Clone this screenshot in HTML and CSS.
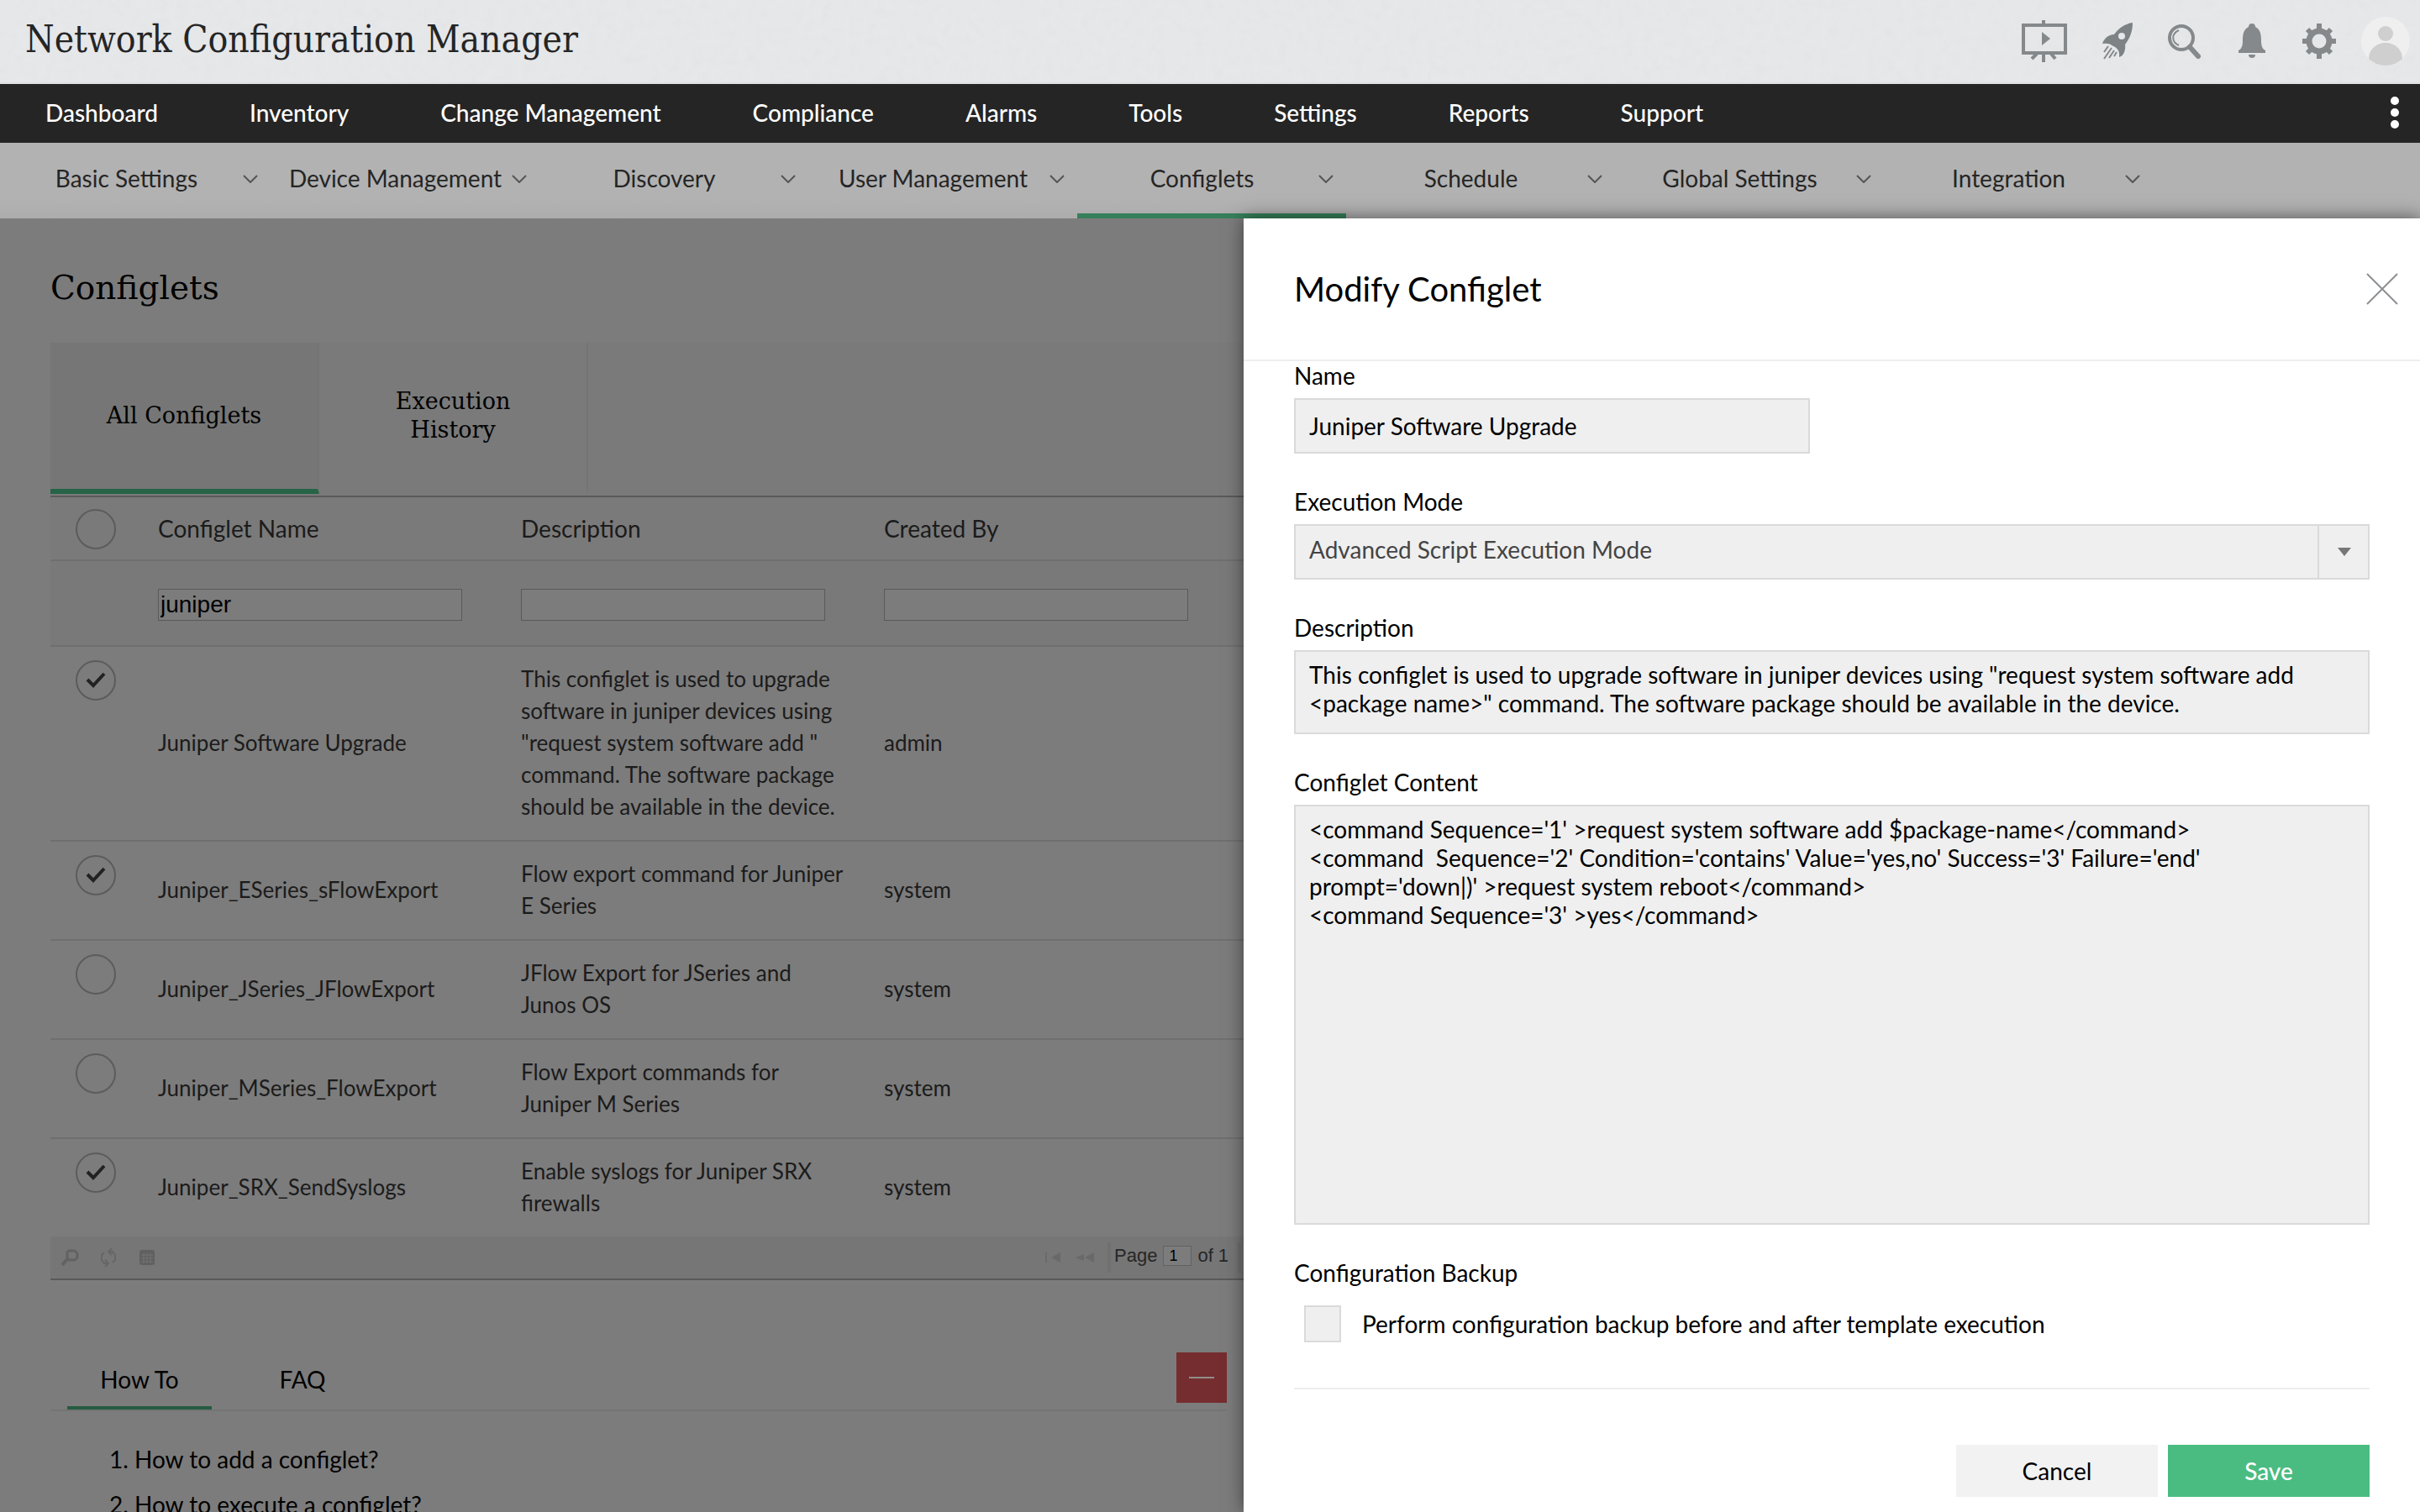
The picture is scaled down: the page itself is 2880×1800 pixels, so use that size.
FILE: index.html
```html
<!DOCTYPE html>
<html lang="en">
<head>
<meta charset="utf-8">
<title>Network Configuration Manager</title>
<link rel="stylesheet" href="styles.css">
</head>
<body>
<header class="topbar">
  <svg class="topbar-texture" aria-hidden="true">
    <filter id="paper"><feTurbulence type="fractalNoise" baseFrequency="0.09" numOctaves="3" seed="4"/><feColorMatrix type="saturate" values="0"/></filter>
    <rect width="100%" height="100%" filter="url(#paper)"/>
  </svg>
  <div class="brand">Network Configuration Manager</div>
  <div class="tools">
    <button class="tool" aria-label="Presentation">
      <svg width="54" height="50" viewBox="0 0 54 50" fill="none" stroke="#85898b">
        <path d="M26 0v6M26 39v11" stroke-width="4"/>
        <rect x="2" y="6" width="50" height="33" stroke-width="4"/>
        <path d="M18 40l-6 6M35 40l5 6" stroke-width="4"/>
        <path d="M24 14l10 8-10 8z" fill="#85898b" stroke="none"/>
      </svg>
    </button>
    <button class="tool" aria-label="Quick start">
      <svg width="40" height="44" viewBox="0 0 40 44">
        <path fill="#7d8284" fill-rule="evenodd" d="M38 0C29 1 21 7 16 14 9 14 4 19 2 25 7 24 12 25 15 28c5 2 8 6 7 13 5-1 8-8 7-15 6-8 9-16 9-26zM25 12a4 4 0 1 1 0 8 4 4 0 0 1 0-8z"/>
        <path d="M9 28l-5 7M13 30L4 43M16 33l-6 9M19 35l-3 5" stroke="#85898b" stroke-width="2" fill="none"/>
      </svg>
    </button>
    <button class="tool" aria-label="Search">
      <svg width="40" height="42" viewBox="0 0 40 42" fill="none" stroke="#85898b">
        <circle cx="16" cy="17" r="14" stroke-width="4"/>
        <path d="M13 8c-9 4-9 14 0 18" stroke-width="2"/>
        <path d="M26 28l10 11" stroke-width="6" stroke-linecap="round"/>
      </svg>
    </button>
    <button class="tool" aria-label="Notifications">
      <svg width="40" height="42" viewBox="0 0 40 42" fill="#85898b">
        <path d="M20 0c3 0 4 2 4 4 6 3 7 9 7 16 0 6 1 10 5 12v3H4v-3c4-2 5-6 5-12 0-7 1-13 7-16 0-2 1-4 4-4z"/>
        <path d="M16 37h8c0 3-2 4-4 4s-4-1-4-4z"/>
      </svg>
    </button>
    <button class="tool" aria-label="Settings">
      <svg width="40" height="42" viewBox="0 0 40 42" fill="none" stroke="#85898b">
        <circle cx="20" cy="21" r="12" stroke-width="7"/>
        <path d="M20 0v8M20 34v8M0 21h8M32 21h8M6 7l6 6M28 29l6 6M34 7l-6 6M12 29l-6 6" stroke-width="6"/>
      </svg>
    </button>
    <button class="tool tool-user" aria-label="Account">
      <svg width="58" height="58" viewBox="0 0 58 58">
        <circle cx="29" cy="29" r="29" fill="#efefef"/>
        <circle cx="29" cy="20" r="9" fill="#cfcfcf"/>
        <path d="M9 50c0-11 9-19 20-19s20 8 20 19a29 29 0 0 1-40 0z" fill="#cfcfcf"/>
      </svg>
    </button>
  </div>
</header>

<nav class="mainnav">
  <a href="#">Dashboard</a>
  <a href="#">Inventory</a>
  <a href="#">Change Management</a>
  <a href="#">Compliance</a>
  <a href="#">Alarms</a>
  <a href="#">Tools</a>
  <a href="#">Settings</a>
  <a href="#">Reports</a>
  <a href="#">Support</a>
  <button class="more" aria-label="More"><svg width="10" height="38" viewBox="0 0 10 38" fill="#fff"><circle cx="5" cy="5" r="5"/><circle cx="5" cy="19" r="5"/><circle cx="5" cy="33" r="5"/></svg></button>
</nav>

<nav class="subnav">
  <a href="#"><span>Basic Settings</span><svg class="chev" viewBox="0 0 18 10"><path d="M1 1l8 8 8-8"/></svg></a>
  <a href="#"><span>Device Management</span><svg class="chev" viewBox="0 0 18 10"><path d="M1 1l8 8 8-8"/></svg></a>
  <a href="#"><span>Discovery</span><svg class="chev" viewBox="0 0 18 10"><path d="M1 1l8 8 8-8"/></svg></a>
  <a href="#"><span>User Management</span><svg class="chev" viewBox="0 0 18 10"><path d="M1 1l8 8 8-8"/></svg></a>
  <a href="#" class="active"><span>Configlets</span><svg class="chev" viewBox="0 0 18 10"><path d="M1 1l8 8 8-8"/></svg></a>
  <a href="#"><span>Schedule</span><svg class="chev" viewBox="0 0 18 10"><path d="M1 1l8 8 8-8"/></svg></a>
  <a href="#"><span>Global Settings</span><svg class="chev" viewBox="0 0 18 10"><path d="M1 1l8 8 8-8"/></svg></a>
  <a href="#"><span>Integration</span><svg class="chev" viewBox="0 0 18 10"><path d="M1 1l8 8 8-8"/></svg></a>
</nav>

<div class="workspace">
  <main class="page">
    <h1>Configlets</h1>
    <div class="tabs">
      <button class="tab active">All Configlets</button>
      <button class="tab">Execution History</button>
    </div>
    <table class="grid">
      <colgroup><col class="c-check"><col class="c-text"><col class="c-text"><col></colgroup>
      <thead>
        <tr class="heads">
          <th><input type="checkbox" class="round" aria-label="Select all"></th>
          <th>Configlet Name</th><th>Description</th><th>Created By</th>
        </tr>
        <tr class="filters">
          <td></td>
          <td><input type="text" value="juniper" aria-label="Filter by name"></td>
          <td><input type="text" aria-label="Filter by description"></td>
          <td><input type="text" aria-label="Filter by creator"></td>
        </tr>
      </thead>
      <tbody>
        <tr><td><input type="checkbox" class="round" checked aria-label="Juniper Software Upgrade"></td><td>Juniper Software Upgrade</td><td>This configlet is used to upgrade software in juniper devices using "request system software add " command. The software package should be available in the device.</td><td>admin</td></tr>
        <tr><td><input type="checkbox" class="round" checked aria-label="Juniper_ESeries_sFlowExport"></td><td>Juniper_ESeries_sFlowExport</td><td>Flow export command for Juniper E Series</td><td>system</td></tr>
        <tr><td><input type="checkbox" class="round" aria-label="Juniper_JSeries_JFlowExport"></td><td>Juniper_JSeries_JFlowExport</td><td>JFlow Export for JSeries and Junos OS</td><td>system</td></tr>
        <tr><td><input type="checkbox" class="round" aria-label="Juniper_MSeries_FlowExport"></td><td>Juniper_MSeries_FlowExport</td><td>Flow Export commands for Juniper M Series</td><td>system</td></tr>
        <tr><td><input type="checkbox" class="round" checked aria-label="Juniper_SRX_SendSyslogs"></td><td>Juniper_SRX_SendSyslogs</td><td>Enable syslogs for Juniper SRX firewalls</td><td>system</td></tr>
      </tbody>
    </table>
    <div class="pager">
      <div class="pager-tools">
        <button aria-label="Find"><svg width="22" height="22" viewBox="0 0 22 22" fill="none" stroke="#626262" stroke-width="3"><path d="M10 3h7l3 3v5l-3 3h-7l-2-3V5z"/><path d="M8 13l-6 7" stroke-width="4"/></svg></button>
        <button aria-label="Refresh"><svg width="22" height="22" viewBox="0 0 22 22" fill="none" stroke="#666" stroke-width="2"><path d="M12 4h4l3 4v6l-3 3M15 0l-4 4 4 4M10 18H6l-3-4V8l3-3M7 22l4-4-4-4"/></svg></button>
        <button aria-label="Columns"><svg width="22" height="22" viewBox="0 0 22 22"><rect x="2" y="2" width="18" height="18" rx="3" fill="#606060"/><path d="M4 8h14M4 12h14M4 16h14M7 6v12M11 6v12M15 6v12" stroke="#727272"/></svg></button>
      </div>
      <div class="pager-nav">
        <svg width="20" height="12" viewBox="0 0 20 12" fill="#696969"><path d="M0 0h2v12H0zM18 0v12L7 6z"/></svg>
        <svg width="22" height="12" viewBox="0 0 22 12" fill="#696969"><path d="M10 2v8L0 6zM22 0v12L11 6z"/></svg>
        <span class="sep"></span>
        <label class="page-no">Page <input type="text" value="1"> of 1</label>
        <span class="sep"></span>
      </div>
    </div>
    <section class="help">
      <div class="help-tabs">
        <button class="help-tab active">How To</button>
        <button class="help-tab">FAQ</button>
        <button class="collapse" aria-label="Collapse"></button>
      </div>
      <ol>
        <li>How to add a configlet?</li>
        <li>How to execute a configlet?</li>
      </ol>
    </section>
  </main>

  <aside class="drawer">
    <div class="drawer-head">
      <h2>Modify Configlet</h2>
      <button class="close" aria-label="Close"><svg width="38" height="38" viewBox="0 0 38 38" stroke="#8d9093" stroke-width="2"><path d="M1 1l36 36M37 1L1 37"/></svg></button>
    </div>
    <form class="form">
      <label for="name">Name</label>
      <input type="text" id="name" value="Juniper Software Upgrade">
      <label for="mode">Execution Mode</label>
      <div class="select">
        <select id="mode"><option>Advanced Script Execution Mode</option></select>
        <span class="select-arrow"></span>
      </div>
      <label for="desc">Description</label>
      <textarea id="desc" class="short" spellcheck="false">This configlet is used to upgrade software in juniper devices using "request system software add &lt;package name&gt;" command. The software package should be available in the device.</textarea>
      <label for="content">Configlet Content</label>
      <textarea id="content" class="tall" spellcheck="false">&lt;command Sequence='1' &gt;request system software add $package-name&lt;/command&gt;
&lt;command  Sequence='2' Condition='contains' Value='yes,no' Success='3' Failure='end' prompt='down|)' &gt;request system reboot&lt;/command&gt;
&lt;command Sequence='3' &gt;yes&lt;/command&gt;</textarea>
      <div class="group-title">Configuration Backup</div>
      <label class="check"><input type="checkbox">Perform configuration backup before and after template execution</label>
      <div class="actions">
        <button type="button" class="btn">Cancel</button>
        <button type="button" class="btn save">Save</button>
      </div>
    </form>
  </aside>
</div>
</body>
</html>
```
FILE: styles.css
```css
* { box-sizing: border-box; }

body {
  margin: 0;
  height: 100vh;
  display: flex;
  flex-direction: column;
  overflow: hidden;
  background: #7c7c7c;
  color: #000;
  font: 28px/34px Lato, "Liberation Sans", sans-serif;
}

button, input, select, textarea { font: inherit; color: inherit; margin: 0; }
button { border: 0; background: none; padding: 0; cursor: pointer; }
a { color: inherit; text-decoration: none; }
svg { display: block; }

/* Top bar */
.topbar {
  position: relative;
  flex: none;
  height: 100px;
  padding: 0 12px 0 30px;
  display: flex;
  align-items: center;
  justify-content: space-between;
  background: #e6e8ea;
  border-bottom: 2px solid #dfe2e1;
}
.topbar-texture { position: absolute; inset: 0; width: 100%; height: 100%; opacity: 0.05; }
.brand {
  position: relative;
  padding-bottom: 4px;
  font: 44px/50px "DejaVu Serif Condensed", "DejaVu Serif", serif;
  color: #252525;
}
.tools { position: relative; display: flex; align-items: center; gap: 20px; }
.tool { padding: 0 10px; }
.tool-user { padding: 0; }

/* Main navigation */
.mainnav {
  flex: none;
  height: 70px;
  padding: 0 25px 2px 54px;
  display: flex;
  align-items: center;
  gap: 109px;
  background: #252525;
  color: #fff;
  font-weight: 500;
}
.more { margin-left: auto; }

/* Section navigation */
.subnav {
  flex: none;
  height: 90px;
  padding-left: 2px;
  display: flex;
  background: linear-gradient(#b2b2b2 75%, #acacac);
  color: #252525;
}
.subnav a {
  width: 320px;
  padding: 2px 15px 0 0;
  display: flex;
  align-items: center;
  border-bottom: 6px solid transparent;
}
.subnav span { flex: 1; padding: 0 0 2px 10px; text-align: center; }
.subnav .active { border-color: #35805a; }
.chev { width: 18px; height: 10px; fill: none; stroke: #555; stroke-width: 2; }

/* Page behind the drawer */
.workspace { position: relative; flex: 1; min-height: 0; }
.page { height: 100%; padding: 58px 60px 0; overflow: clip; }
h1 {
  margin: 0 0 40px;
  font: 39px/50px "DejaVu Serif", serif;
}
.tabs { display: flex; height: 182px; padding-bottom: 2px; background: #7a7a7a; }
.tab {
  width: 320px;
  padding: 0 60px;
  border-right: 2px solid #747474;
  border-bottom: 6px solid transparent;
  font: 27px/34px "DejaVu Serif", serif;
}
.tab.active { padding: 0; background: #767676; border-bottom-color: #266347; }

.grid {
  width: 100%;
  table-layout: fixed;
  border-collapse: separate;
  border-spacing: 0;
  border-top: 2px solid #5a5a5a;
  color: #1b1b1b;
  font-size: 26px;
  line-height: 38px;
}
.c-check { width: 128px; }
.c-text { width: 432px; }
.grid th, .grid td { padding: 19px 40px 21px 0; text-align: left; font-weight: 400; }
.grid tr > :first-child { padding: 16px 0 0 30px; vertical-align: top; }
.grid tbody tr + tr td { border-top: 2px solid #6f6f6f; }
.grid .heads th { height: 76px; padding-top: 0; padding-bottom: 0; border-bottom: 2px solid #6f6f6f; font-size: 28px; background: #7a7a7a; }
.grid .heads th:first-child { padding-top: 14px; }
.grid .filters td { height: 102px; padding-top: 4px; padding-bottom: 0; border-bottom: 2px solid #6f6f6f; background: #797979; }
.filters input {
  display: block;
  width: 362px;
  height: 38px;
  padding: 0 2px;
  border: 1px solid #5a5a5a;
  background: #7c7c7c;
  color: #000;
  font: 28px/34px "Liberation Sans", sans-serif;
}
.round {
  appearance: none;
  display: block;
  width: 48px;
  height: 48px;
  border: 2px solid #5c5c5c;
  border-radius: 50%;
}
.round:checked {
  background: url("data:image/svg+xml,%3Csvg xmlns='http://www.w3.org/2000/svg' width='24' height='20' fill='none' stroke='%23222' stroke-width='4'%3E%3Cpath d='M2 9l7 7L22 2'/%3E%3C/svg%3E") center no-repeat;
}

.pager {
  height: 52px;
  padding: 0 12px;
  display: grid;
  grid-template-columns: 1fr 392px 1fr;
  align-items: center;
  background: #767676;
  border-bottom: 2px solid #5a5a5a;
  color: #262626;
  font: 22px/24px "Liberation Sans", sans-serif;
}
.pager-tools { display: flex; gap: 24px; }
.pager-nav { display: flex; align-items: center; gap: 16px; }
.sep { width: 4px; height: 36px; background: #707070; }
.page-no { display: flex; align-items: center; gap: 7px; margin: 0 -5px 4px -12px; }
.page-no input {
  width: 34px;
  height: 24px;
  padding: 0 6px;
  border: 1px solid #626262;
  background: #7c7c7c;
  color: #000;
  font-size: 18px;
}

/* Help panel */
.help { width: calc(50% + 20px); margin-top: 86px; }
.help-tabs { display: flex; height: 70px; padding-left: 20px; border-bottom: 2px solid #747474; }
.help-tab { width: 172px; border-bottom: 4px solid transparent; }
.help-tab + .help-tab { margin-left: 22px; }
.help-tab.active { border-color: #265b41; }
.collapse { width: 60px; height: 60px; margin-left: auto; background: #762d2f; display: grid; place-items: center; }
.collapse::before { content: ""; width: 30px; height: 2px; background: #8f8f8f; }
.help ol { margin: 30px 0 0; padding-left: 100px; line-height: 54px; }

/* Drawer */
.drawer {
  position: absolute;
  inset: 0 0 0 auto;
  width: min(1400px, 100%);
  background: #fff;
  box-shadow: 0 0 20px rgba(0, 0, 0, 0.5);
}
.drawer-head {
  height: 170px;
  padding: 0 26px 0 60px;
  display: flex;
  align-items: center;
  justify-content: space-between;
  border-bottom: 2px solid #eee;
}
h2 { margin: 0; font-size: 40px; line-height: 48px; font-weight: 400; }
.form { padding: 0 60px; display: flex; flex-direction: column; }
.form > label, .group-title { margin-bottom: 10px; }
.form > input, .select, .form > textarea { margin-bottom: 40px; }
.form > input, .form select, .form textarea {
  width: 100%;
  border: 2px solid #dadada;
  border-radius: 0;
  background: #efefef;
  padding: 0 16px;
  resize: none;
}
.form > input { width: 48%; height: 66px; }
.select { position: relative; display: flex; }
.form select { appearance: none; height: 66px; padding-bottom: 7px; color: #444; opacity: 1; }
.select-arrow {
  position: absolute;
  inset: 0 0 0 auto;
  width: 62px;
  border-left: 2px solid #dadada;
  display: grid;
  place-items: center;
  pointer-events: none;
}
.select-arrow::before { content: ""; border: 8px solid transparent; border-top: 10px solid #777; border-bottom: 0; }
.form textarea { display: block; padding-top: 10px; overflow: hidden; }
.form .short { height: 100px; }
.form .tall { height: 500px; }
.form .check { margin: 12px 0 54px 12px; display: flex; align-items: center; gap: 25px; }
.check input { appearance: none; width: 44px; height: 44px; border: 2px solid #dadada; background: #efefef; }
.actions { padding-top: 66px; border-top: 2px solid #eee; display: flex; justify-content: flex-end; gap: 12px; }
.btn { width: 240px; height: 62px; background: #f2f2f2; }
.save { background: #4abc81; color: #fff; font-weight: 500; }
```
